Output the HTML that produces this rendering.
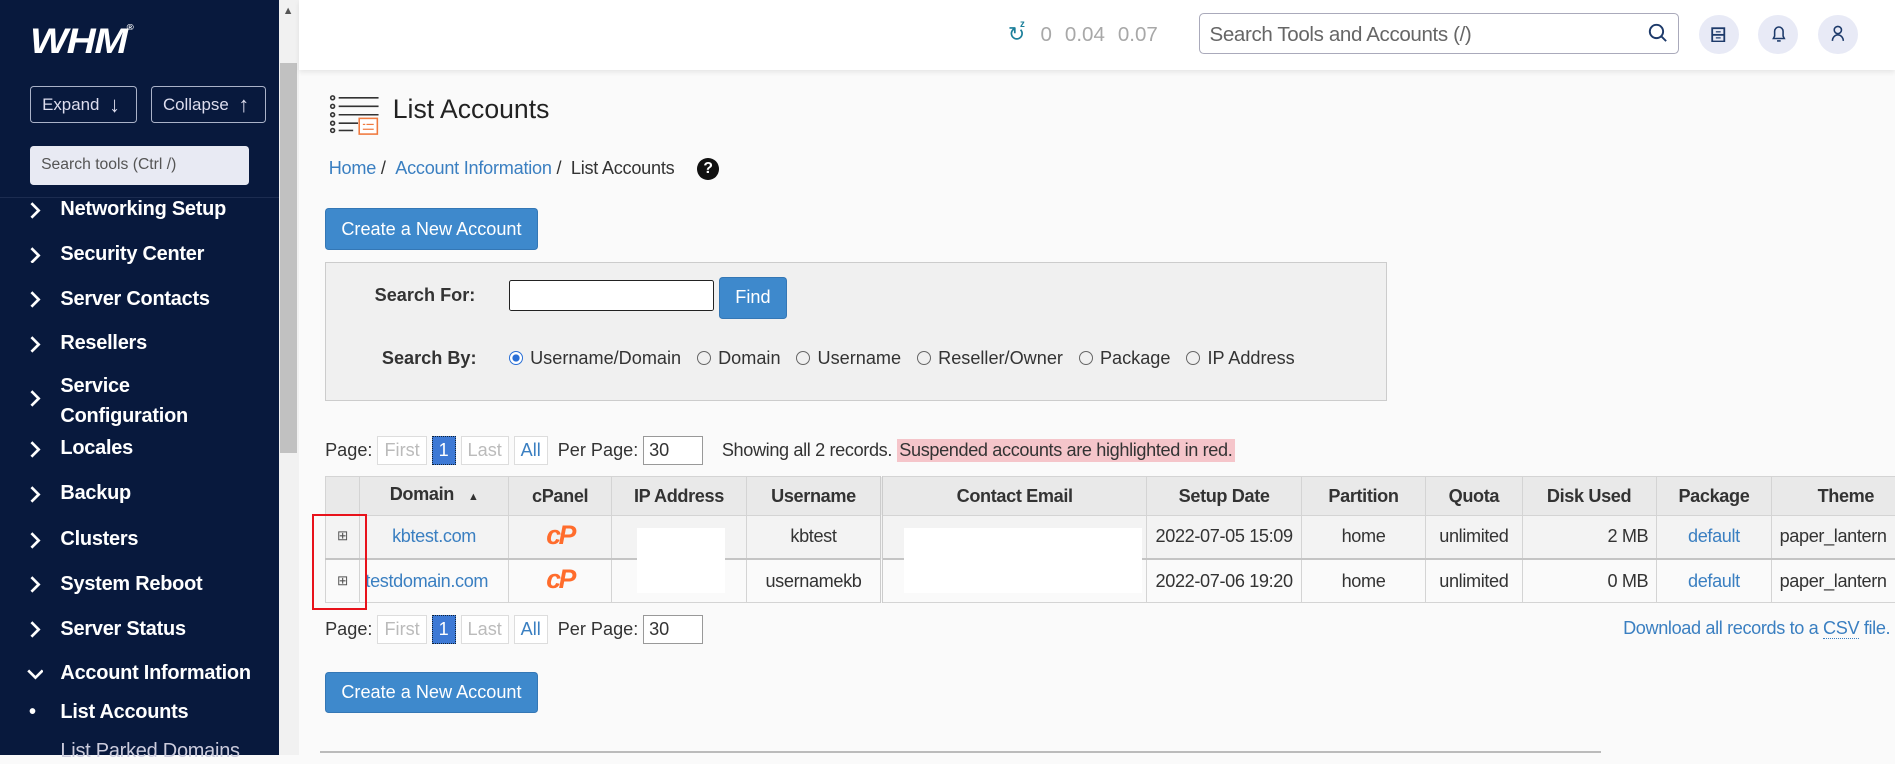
<!DOCTYPE html>
<html><head><meta charset="utf-8">
<style>
html{zoom:1.20855;margin:0;padding:0}
body{margin:0;width:1568px;height:625px;overflow:hidden;position:relative;background:#fafafa;font-family:"Liberation Sans",sans-serif;color:#333}
.abs{position:absolute}
#side{left:0;top:0;width:231px;height:625px;background:#08193d;color:#fff}
.sb{left:231px;top:0;width:16px;height:625px;background:#f1f1f1}
.thumb{left:232px;top:52px;width:14px;height:323px;background:#c1c1c1}
.hdr{left:247px;top:0;width:1321px;height:58px;background:#fff;box-shadow:0 2px 4px rgba(0,0,0,.08)}
.sbtn{border:1px solid #aab2c8;border-radius:3px;height:31px;top:71px;font-size:14px;color:#dde;display:flex;align-items:center;padding-left:9px;box-sizing:border-box}
.mi{left:0;font-size:16.5px;color:#fff;font-weight:bold;letter-spacing:-.2px;height:20px}
.mi svg{position:absolute;left:24px;top:3px}
.mi .t{position:absolute;left:50px;top:0;white-space:nowrap}
.blue{color:#3a7fc1}
.btn{background:#3e89cc;color:#fff;border-radius:3px;border:1px solid #3477b5;box-sizing:border-box;display:flex;align-items:center;justify-content:center;font-size:15px}
.pg{font-size:15px;height:24px;display:flex;align-items:center}
.pb{border:1px solid #ddd;height:24px;box-sizing:border-box;display:inline-flex;align-items:center;padding:0 5px;color:#bbb;background:#fff;margin-right:4px}
table{border-collapse:collapse;font-size:15px;letter-spacing:-.3px}
td,th{border:1px solid #d4d4d4;padding:0 6px;text-align:center;white-space:nowrap;line-height:17px}
th{background:#e9e9e9;height:31px}
td{height:35px}
.cp{color:#ff6c2c;font-weight:bold;font-style:italic;font-size:22px;letter-spacing:-2px;line-height:17px}
.radio{display:inline-block;width:10px;height:10px;border:1px solid #666;border-radius:50%;vertical-align:-1px;margin-right:6px;margin-left:13px}
</style></head><body>
<div id="side" class="abs">
  <div class="abs" style="left:25px;top:18px;font-size:29px;font-weight:bold;font-style:italic;letter-spacing:-1px;transform:scaleX(1.15);transform-origin:left">WHM<span style="font-size:7px;vertical-align:top">®</span></div>
  <div class="abs sbtn" style="left:25px;width:88px">Expand <span style="margin-left:8px;font-size:18px">↓</span></div>
  <div class="abs sbtn" style="left:125px;width:95px">Collapse <span style="margin-left:8px;font-size:18px">↑</span></div>
  <div class="abs" style="left:25px;top:121px;width:181px;height:32px;background:#e8eaf3;border-radius:3px;color:#555;font-size:13px;line-height:32px;padding-left:9px;box-sizing:border-box">Search tools (Ctrl /)</div>
  <div class="abs" style="left:0;top:163px;width:231px;height:1px;background:#1c2c50"></div>
  <div class="abs mi" style="top:164px"><svg width="10" height="14"><path d="M2 1 L8 7 L2 13" fill="none" stroke="#fff" stroke-width="2.2"/></svg><span class="t">Networking Setup</span></div>
  <div class="abs mi" style="top:201px"><svg width="10" height="14"><path d="M2 1 L8 7 L2 13" fill="none" stroke="#fff" stroke-width="2.2"/></svg><span class="t">Security Center</span></div>
  <div class="abs mi" style="top:238px"><svg width="10" height="14"><path d="M2 1 L8 7 L2 13" fill="none" stroke="#fff" stroke-width="2.2"/></svg><span class="t">Server Contacts</span></div>
  <div class="abs mi" style="top:275px"><svg width="10" height="14"><path d="M2 1 L8 7 L2 13" fill="none" stroke="#fff" stroke-width="2.2"/></svg><span class="t">Resellers</span></div>
  <div class="abs mi" style="top:320px"><svg width="10" height="14"><path d="M2 1 L8 7 L2 13" fill="none" stroke="#fff" stroke-width="2.2"/></svg><span class="t" style="top:-13px;line-height:25px">Service<br>Configuration</span></div>
  <div class="abs mi" style="top:362px"><svg width="10" height="14"><path d="M2 1 L8 7 L2 13" fill="none" stroke="#fff" stroke-width="2.2"/></svg><span class="t">Locales</span></div>
  <div class="abs mi" style="top:399px"><svg width="10" height="14"><path d="M2 1 L8 7 L2 13" fill="none" stroke="#fff" stroke-width="2.2"/></svg><span class="t">Backup</span></div>
  <div class="abs mi" style="top:437px"><svg width="10" height="14"><path d="M2 1 L8 7 L2 13" fill="none" stroke="#fff" stroke-width="2.2"/></svg><span class="t">Clusters</span></div>
  <div class="abs mi" style="top:474px"><svg width="10" height="14"><path d="M2 1 L8 7 L2 13" fill="none" stroke="#fff" stroke-width="2.2"/></svg><span class="t">System Reboot</span></div>
  <div class="abs mi" style="top:511px"><svg width="10" height="14"><path d="M2 1 L8 7 L2 13" fill="none" stroke="#fff" stroke-width="2.2"/></svg><span class="t">Server Status</span></div>
  <div class="abs mi" style="top:548px"><svg width="14" height="12" style="left:22px;top:5px"><path d="M1 2 L7 8 L13 2" fill="none" stroke="#fff" stroke-width="2.2"/></svg><span class="t">Account Information</span></div>
  <div class="abs mi" style="top:580px"><span style="position:absolute;left:24px">•</span><span class="t">List Accounts</span></div>
  <div class="abs mi" style="top:612px;font-weight:normal;color:#ccd"><span class="t">List Parked Domains</span></div>
</div>
<div class="abs sb"></div><div class="abs thumb"></div>
<div class="abs" style="left:234px;top:4px;font-size:9px;color:#555">▲</div>
<div class="abs hdr"></div>
<div class="abs" style="left:834px;top:18px;font-size:17px;color:#1b7f9a">↻</div>
<div class="abs" style="left:844px;top:16px;font-size:8px;color:#1b7f9a;font-weight:bold">z</div>
<div class="abs" style="left:861px;top:19px;font-size:17px;color:#a8a8a8;word-spacing:6px">0 0.04 0.07</div>
<div class="abs" style="left:992px;top:11px;width:397px;height:34px;border:1px solid #aab;border-radius:4px;box-sizing:border-box;background:#fff;font-size:17px;color:#666;padding:7px 8px;letter-spacing:-.3px">Search Tools and Accounts (/)</div>
<svg class="abs" style="left:1364px;top:19px" width="16" height="18"><circle cx="7" cy="7" r="5.5" fill="none" stroke="#1d3a6a" stroke-width="1.6"/><line x1="11" y1="11" x2="15" y2="15" stroke="#1d3a6a" stroke-width="1.6"/></svg>
<div class="abs" style="left:1406px;top:12px;width:33px;height:33px;border-radius:50%;background:#e8eaf6"></div>
<svg class="abs" style="left:1416px;top:22px" width="13" height="13"><rect x="1" y="1" width="10" height="11" fill="none" stroke="#1d3a6a" stroke-width="1.5"/><line x1="1" y1="6.5" x2="11" y2="6.5" stroke="#1d3a6a" stroke-width="1.5"/><line x1="4" y1="4" x2="8" y2="4" stroke="#1d3a6a"/><line x1="4" y1="9" x2="8" y2="9" stroke="#1d3a6a"/></svg>
<div class="abs" style="left:1455px;top:12px;width:33px;height:33px;border-radius:50%;background:#e8eaf6"></div>
<svg class="abs" style="left:1465px;top:20px" width="13" height="16"><path d="M2 12 L3 10 V6 A3.5 3.5 0 0 1 10 6 V10 L11 12 Z" fill="none" stroke="#1d3a6a" stroke-width="1.3"/><line x1="5" y1="14" x2="8" y2="14" stroke="#1d3a6a" stroke-width="1.3"/></svg>
<div class="abs" style="left:1504px;top:12px;width:33px;height:33px;border-radius:50%;background:#e8eaf6"></div>
<svg class="abs" style="left:1514px;top:20px" width="13" height="16"><circle cx="6.5" cy="5" r="3" fill="none" stroke="#1d3a6a" stroke-width="1.3"/><path d="M2 14 A4.5 5 0 0 1 11 14" fill="none" stroke="#1d3a6a" stroke-width="1.3"/></svg>

<svg class="abs" style="left:272px;top:77px" width="42" height="35">
<g fill="none" stroke="#333" stroke-width="1.3"><circle cx="3" cy="4" r="1.6"/><circle cx="3" cy="11" r="1.6"/><circle cx="3" cy="18" r="1.6"/><circle cx="3" cy="25" r="1.6"/><circle cx="3" cy="31" r="1.6"/></g>
<g stroke="#333" stroke-width="1.3"><line x1="8" y1="4" x2="41" y2="4"/><line x1="8" y1="11" x2="41" y2="11"/><line x1="8" y1="18" x2="41" y2="18"/><line x1="8" y1="25" x2="24" y2="25"/><line x1="8" y1="31" x2="20" y2="31"/></g>
<rect x="25" y="21" width="15" height="13" fill="#fff" stroke="#f07a3f" stroke-width="1.3"/><g stroke="#f07a3f"><line x1="28" y1="26" x2="30" y2="26"/><line x1="31" y1="26" x2="37" y2="26"/><line x1="28" y1="30" x2="37" y2="30"/></g></svg>
<div class="abs" style="left:325px;top:78px;font-size:22px;color:#222">List Accounts</div>
<div class="abs" style="left:272px;top:131px;font-size:15px;letter-spacing:-.2px"><span class="blue">Home</span> / &nbsp;<span class="blue">Account Information</span> / &nbsp;List Accounts</div>
<div class="abs" style="left:577px;top:131px;width:18px;height:18px;border-radius:50%;background:#111;color:#fff;font-size:13px;font-weight:bold;text-align:center;line-height:18px">?</div>
<div class="abs btn" style="left:269px;top:172px;width:176px;height:35px">Create a New Account</div>

<div class="abs" style="left:269px;top:217px;width:879px;height:115px;background:#f0f0f0;border:1px solid #ccc;box-sizing:border-box"></div>
<div class="abs" style="left:310px;top:236px;font-size:15px;font-weight:bold">Search For:</div>
<div class="abs" style="left:421px;top:232px;width:170px;height:25px;border:1.5px solid #222;border-radius:2px;background:#fff;box-sizing:border-box"></div>
<div class="abs btn" style="left:595px;top:229px;width:56px;height:35px">Find</div>
<div class="abs" style="left:316px;top:288px;font-size:15px;font-weight:bold">Search By:</div>
<div class="abs" style="left:408px;top:288px;font-size:15px">
<span class="radio" style="border-color:#2a6fd6;background:radial-gradient(#2a6fd6 40%,#fff 45%)"></span>Username/Domain<span class="radio"></span>Domain<span class="radio"></span>Username<span class="radio"></span>Reseller/Owner<span class="radio"></span>Package<span class="radio"></span>IP Address</div>

<div class="abs pg" style="left:269px;top:361px">Page:&nbsp;<span class="pb">First</span><span class="pb" style="background:#3d79d5;color:#fff;border:1px dotted #123">1</span><span class="pb">Last</span><span class="pb" style="color:#3a7fc1">All</span>&nbsp;Per Page:&nbsp;<span style="border:1px solid #999;width:49px;height:24px;box-sizing:border-box;background:#fff;padding:2px 4px">30</span>
<span style="margin-left:16px;letter-spacing:-.3px">Showing all 2 records. </span><span style="background:#f5c5ca;padding:1px 2px;margin-left:4px;letter-spacing:-.3px">Suspended accounts are highlighted in red.</span></div>

<table class="abs" style="left:269px;top:394px;width:1320px">
<tr><th style="width:15px"></th><th style="width:111px">Domain &nbsp; <span style="font-size:9px">▲</span></th><th style="width:72px">cPanel</th><th style="width:99px">IP Address</th><th style="width:98px">Username</th><th style="width:206px;border-left:3px double #ccc">Contact Email</th><th style="width:115px">Setup Date</th><th style="width:90px">Partition</th><th style="width:67px">Quota</th><th style="width:98px">Disk Used</th><th style="width:83px">Package</th><th>Theme</th></tr>
<tr style="background:#f3f3f3"><td style="font-size:11px;color:#555">⊞</td><td class="blue">kbtest.com</td><td><span class="cp">cP</span></td><td></td><td>kbtest</td><td style="border-left:3px double #ccc"></td><td>2022-07-05 15:09</td><td>home</td><td>unlimited</td><td style="text-align:right">2 MB</td><td class="blue">default</td><td style="text-align:left">paper_lantern</td></tr>
<tr style="background:#fafafa;border-top:2px solid #c4c4c4"><td style="font-size:11px;color:#555">⊞</td><td class="blue" style="text-indent:-12px">testdomain.com</td><td><span class="cp">cP</span></td><td></td><td>usernamekb</td><td style="border-left:3px double #ccc"></td><td>2022-07-06 19:20</td><td>home</td><td>unlimited</td><td style="text-align:right">0 MB</td><td class="blue">default</td><td style="text-align:left">paper_lantern</td></tr>
</table>
<div class="abs" style="left:527px;top:437px;width:73px;height:54px;background:#fff"></div>
<div class="abs" style="left:748px;top:437px;width:197px;height:54px;background:#fff"></div>
<div class="abs" style="left:258px;top:425px;width:46px;height:80px;border:2px solid #e8121b;box-sizing:border-box"></div>

<div class="abs pg" style="left:269px;top:509px">Page:&nbsp;<span class="pb">First</span><span class="pb" style="background:#3d79d5;color:#fff;border:1px dotted #123">1</span><span class="pb">Last</span><span class="pb" style="color:#3a7fc1">All</span>&nbsp;Per Page:&nbsp;<span style="border:1px solid #999;width:49px;height:24px;box-sizing:border-box;background:#fff;padding:2px 4px">30</span></div>
<div class="abs blue" style="left:1343px;top:511px;font-size:15px;white-space:nowrap;letter-spacing:-.3px">Download all records to a <span style="border-bottom:1px dotted #3a7fc1">CSV</span> file.</div>
<div class="abs btn" style="left:269px;top:556px;width:176px;height:34px">Create a New Account</div>
<div class="abs" style="left:265px;top:621px;width:1060px;height:2px;background:#bbb"></div>
</body></html>
